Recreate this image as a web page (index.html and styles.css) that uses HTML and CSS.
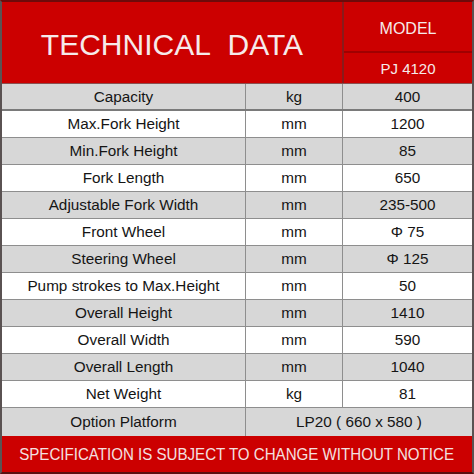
FILE: index.html
```html
<!DOCTYPE html>
<html>
<head>
<meta charset="utf-8">
<link rel="stylesheet" href="styles.css">
</head>
<body>
<div class="sheet">
  <div class="head">
    <div class="title">TECHNICAL&nbsp;&nbsp;DATA</div>
    <div class="model">
      <div class="model-label">MODEL</div>
      <div class="model-name">PJ 4120</div>
    </div>
  </div>
  <div class="rows">
    <div class="row gray"><div class="c1">Capacity</div><div class="c2">kg</div><div class="c3">400</div></div>
    <div class="row"><div class="c1">Max.Fork Height</div><div class="c2">mm</div><div class="c3">1200</div></div>
    <div class="row gray"><div class="c1">Min.Fork Height</div><div class="c2">mm</div><div class="c3">85</div></div>
    <div class="row"><div class="c1">Fork Length</div><div class="c2">mm</div><div class="c3">650</div></div>
    <div class="row gray"><div class="c1">Adjustable Fork Width</div><div class="c2">mm</div><div class="c3">235-500</div></div>
    <div class="row"><div class="c1">Front Wheel</div><div class="c2">mm</div><div class="c3">Φ 75</div></div>
    <div class="row gray"><div class="c1">Steering Wheel</div><div class="c2">mm</div><div class="c3">Φ 125</div></div>
    <div class="row"><div class="c1">Pump strokes to Max.Height</div><div class="c2">mm</div><div class="c3">50</div></div>
    <div class="row gray"><div class="c1">Overall Height</div><div class="c2">mm</div><div class="c3">1410</div></div>
    <div class="row"><div class="c1">Overall Width</div><div class="c2">mm</div><div class="c3">590</div></div>
    <div class="row gray"><div class="c1">Overall Length</div><div class="c2">mm</div><div class="c3">1040</div></div>
    <div class="row"><div class="c1">Net Weight</div><div class="c2">kg</div><div class="c3">81</div></div>
    <div class="row gray last"><div class="c1">Option Platform</div><div class="c23">LP20 ( 660 x 580 )</div></div>
  </div>
  <div class="foot"><span class="foot-text">SPECIFICATION IS SUBJECT TO CHANGE WITHOUT NOTICE</span></div>
</div>
</body>
</html>
```
FILE: styles.css
```css
html, body {
  margin: 0;
  padding: 0;
  background: #4a4a4a;
}
body {
  width: 474px;
  height: 474px;
  overflow: hidden;
  font-family: "Liberation Sans", Arial, sans-serif;
}
.sheet {
  box-sizing: border-box;
  width: 474px;
  height: 474px;
  border: 2px solid #5a5252;
  border-top-color: #6e0a0a;
  border-bottom-color: #5a1010;
  display: flex;
  flex-direction: column;
  background: #fff;
}
.head {
  height: 81px;
  display: flex;
  background: #cc0000;
  color: #f6eaea;
  border-bottom: 1px solid #8a5050;
}
.title {
  width: 340px;
  display: flex;
  align-items: center;
  justify-content: center;
  font-size: 30px;
  padding-top: 4px;
  box-sizing: border-box;
}
.model {
  flex: 1;
  display: flex;
  flex-direction: column;
  border-left: 2px solid #8a1a1a;
}
.model-label {
  height: 51px;
  display: flex;
  align-items: center;
  justify-content: center;
  font-size: 16px;
  border-bottom: 2px solid #a00000;
  box-sizing: border-box;
  padding-top: 4px;
}
.model-name {
  flex: 1;
  display: flex;
  align-items: center;
  justify-content: center;
  font-size: 15px;
}
.rows {
  display: flex;
  flex-direction: column;
}
.row {
  height: 27px;
  box-sizing: border-box;
  display: grid;
  grid-template-columns: 243px 98px 1fr;
  border-bottom: 1px solid #8e8e8e;
  background: #ffffff;
  color: #151515;
  font-size: 15.3px;
}
.row.gray {
  background: #d7d7d7;
}
.row:first-child {
  border-bottom: 2px solid #7a7a7a;
}
.row > div {
  display: flex;
  align-items: center;
  justify-content: center;
}
.c2 {
  border-left: 1px solid #8e8e8e;
  border-right: 1px solid #8e8e8e;
}
.c23 {
  grid-column: 2 / 4;
  border-left: 1px solid #8e8e8e;
}
.row.last {
  height: 28px;
  border-bottom: none;
}
.foot {
  flex: 1;
  background: #cc0000;
  color: #f4e0e0;
  display: flex;
  align-items: center;
  justify-content: center;
  white-space: nowrap;
}
.foot-text {
  display: inline-block;
  font-size: 16.5px;
  transform: scaleX(0.915);
}
```
